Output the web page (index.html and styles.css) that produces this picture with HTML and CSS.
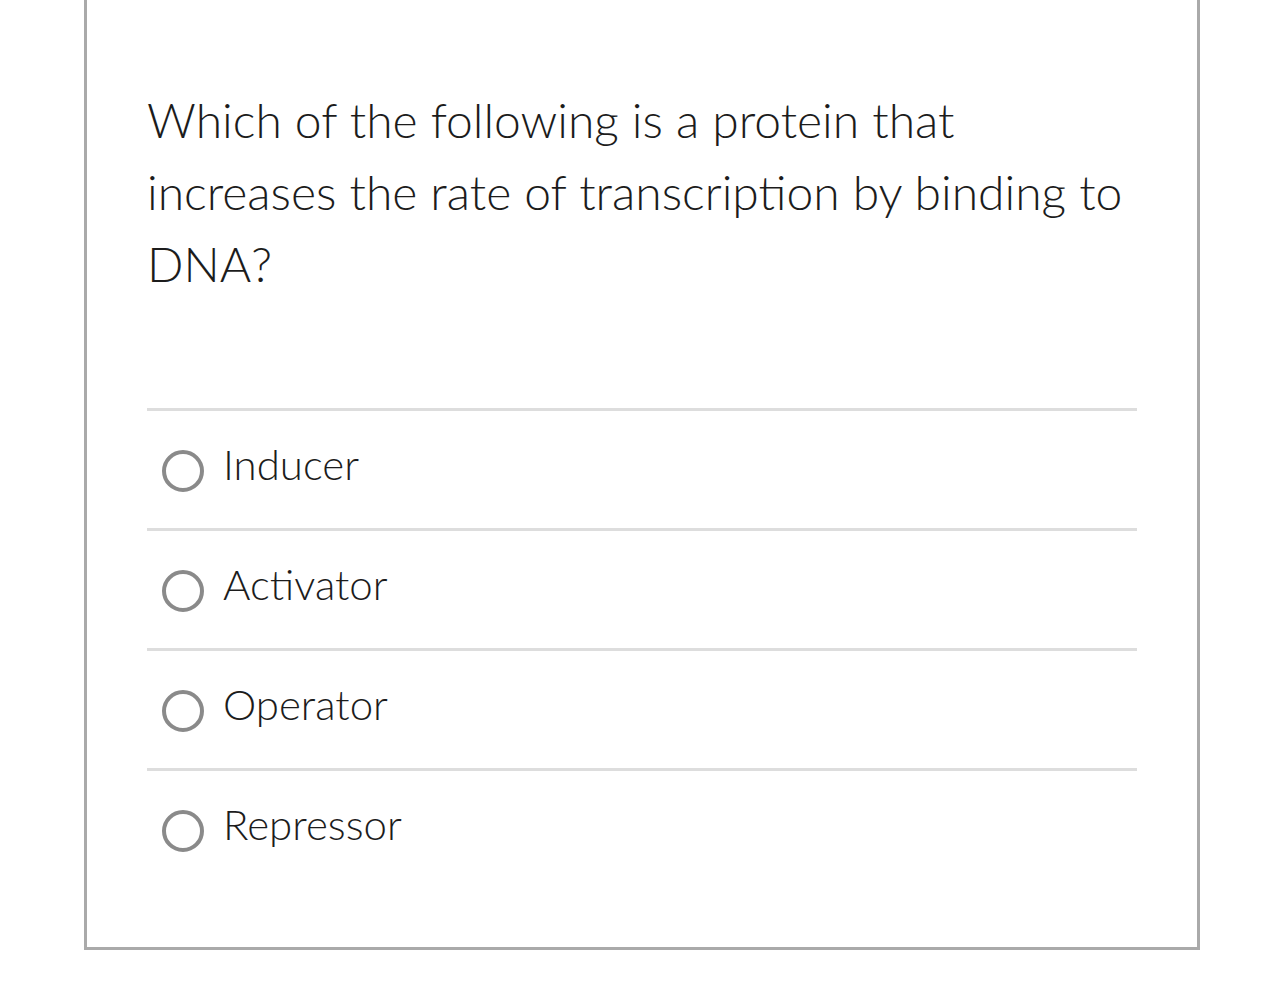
FILE: index.html
```html
<!DOCTYPE html>
<html>
<head>
<meta charset="utf-8">
<link rel="stylesheet" href="styles.css">
</head>
<body>
<div class="card">
  <p class="question">Which of the following is a protein that increases the rate of transcription by binding to DNA?</p>
  <ul class="options">
    <li class="option"><span class="radio"></span><span class="label">Inducer</span></li>
    <li class="option"><span class="radio"></span><span class="label">Activator</span></li>
    <li class="option"><span class="radio"></span><span class="label">Operator</span></li>
    <li class="option"><span class="radio"></span><span class="label">Repressor</span></li>
  </ul>
</div>
</body>
</html>
```
FILE: styles.css
```css
html, body {
  margin: 0;
  padding: 0;
  background: #ffffff;
}
body {
  font-family: "Lato", "Liberation Sans", sans-serif;
  color: #1c1c1c;
}
.card {
  margin-left: 84px;
  border-left: 3px solid #aaaaaa;
  border-right: 3px solid #aaaaaa;
  border-bottom: 3px solid #aaaaaa;
  padding: 84px 60px 59px 60px;
  box-sizing: content-box;
  width: 990px;
}
.question {
  margin: 0;
  font-size: 48px;
  font-weight: 300;
  line-height: 72px;
}
.options {
  list-style: none;
  margin: 108px 0 0 0;
  padding: 0;
}
.option {
  display: flex;
  align-items: center;
  height: 117px;
  border-top: 3px solid #dddddd;
}
.radio {
  width: 34px;
  height: 34px;
  border: 4px solid #8a8a8a;
  border-radius: 50%;
  margin: 3px 19px 0 15px;
  flex: none;
}
.label {
  font-size: 42px;
  font-weight: 300;
  line-height: 60px;
  margin-bottom: 12px;
}
```
